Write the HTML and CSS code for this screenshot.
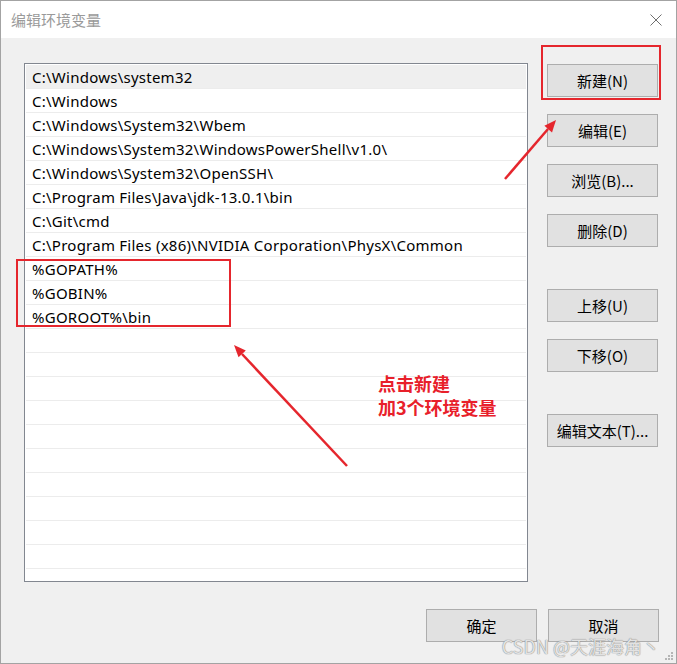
FILE: index.html
```html
<!DOCTYPE html>
<html lang="zh-CN">
<head>
    <meta charset="UTF-8">
    <title>编辑环境变量</title>
    <link rel="stylesheet" href="styles.css">
</head>
<body>
    <div class="window">
        <!-- 标题栏 -->
        <div class="titlebar">
            <span class="title">编辑环境变量</span>
            <svg class="close" width="12" height="12" viewBox="0 0 12 12">
                <path d="M0.5 0.5 L11.5 11.5 M11.5 0.5 L0.5 11.5" stroke="#6f6f6f" stroke-width="1" fill="none"/>
            </svg>
        </div>

        <div class="main">
            <div class="path-list">
                <div class="row selected">C:\Windows\system32</div>
                <div class="row">C:\Windows</div>
                <div class="row">C:\Windows\System32\Wbem</div>
                <div class="row">C:\Windows\System32\WindowsPowerShell\v1.0\</div>
                <div class="row">C:\Windows\System32\OpenSSH\</div>
                <div class="row">C:\Program Files\Java\jdk-13.0.1\bin</div>
                <div class="row">C:\Git\cmd</div>
                <div class="row">C:\Program Files (x86)\NVIDIA Corporation\PhysX\Common</div>
                <div class="row">%GOPATH%</div>
                <div class="row">%GOBIN%</div>
                <div class="row">%GOROOT%\bin</div>
                <div class="row"></div>
                <div class="row"></div>
                <div class="row"></div>
                <div class="row"></div>
                <div class="row"></div>
                <div class="row"></div>
                <div class="row"></div>
                <div class="row"></div>
                <div class="row"></div>
                <div class="row"></div>
                <div class="row"></div>
            </div>

            <div class="side-buttons">
                <button>新建(N)</button>
                <button>编辑(E)</button>
                <button>浏览(B)...</button>
                <button>删除(D)</button>
                <button class="group">上移(U)</button>
                <button>下移(O)</button>
                <button class="group">编辑文本(T)...</button>
            </div>
        </div>

        <div class="footer">
            <button>确定</button>
            <button>取消</button>
        </div>

        <!-- 标注 -->
        <div class="mark mark-new"></div>
        <div class="mark mark-go"></div>
        <div class="note">点击新建<br>加3个环境变量</div>
        <svg class="arrows" width="677" height="664" viewBox="0 0 677 664">
            <line x1="505" y1="179" x2="548" y2="129" stroke="#e5262d" stroke-width="2.5"/>
            <polygon points="556,120 552,132.4 544.4,125.8" fill="#e5262d"/>
            <line x1="347" y1="466" x2="242" y2="354" stroke="#e5262d" stroke-width="2.5"/>
            <polygon points="234,345 245.8,350.4 238.5,357.2" fill="#e5262d"/>
        </svg>

        <div class="watermark">CSDN @天涯海角丶</div>
        <svg class="grip" width="10" height="10" viewBox="0 0 10 10">
            <rect x="7" y="1" width="2" height="2" fill="#b5b5b5"/>
            <rect x="4" y="4" width="2" height="2" fill="#b5b5b5"/>
            <rect x="7" y="4" width="2" height="2" fill="#b5b5b5"/>
            <rect x="1" y="7" width="2" height="2" fill="#b5b5b5"/>
            <rect x="4" y="7" width="2" height="2" fill="#b5b5b5"/>
            <rect x="7" y="7" width="2" height="2" fill="#b5b5b5"/>
        </svg>
    </div>
</body>
</html>
```

FILE: styles.css
```css
body {
    margin: 0;
    padding: 0;
    background: #ffffff;
    font-family: "Noto Sans", "Noto Sans CJK SC", sans-serif;
    font-size: 15px;
    color: #000;
}
.window {
    position: relative;
    width: 677px;
    height: 664px;
    box-sizing: border-box;
    border: 1px solid #a3a3a3;
    background-color: #f0f0f0;
    overflow: hidden;
}
.titlebar {
    height: 37px;
    background-color: #fff;
    display: flex;
    align-items: center;
    justify-content: space-between;
    padding: 0 14px 0 10px;
}
.title {
    font-family: "Noto Sans CJK SC", sans-serif;
    font-size: 15px;
    color: #9a9a9a;
}
.close {
    margin-top: 1px;
}
.main {
    display: flex;
    align-items: flex-start;
    padding: 25px 0 0 23px;
}
.path-list {
    width: 504px;
    height: 519px;
    box-sizing: border-box;
    border: 1px solid #828790;
    background-color: #fff;
    padding: 1px 1px 0 1px;
    overflow: hidden;
}
.row {
    height: 24px;
    box-sizing: border-box;
    border-bottom: 1px solid #ececec;
    padding: 1px 0 0 6px;
    line-height: 22px;
    letter-spacing: 0.25px;
    white-space: nowrap;
}
.row.selected {
    background-color: #efefef;
}
.side-buttons {
    display: flex;
    flex-direction: column;
    gap: 17px;
    margin-left: 19px;
    padding-top: 1px;
}
.side-buttons .group {
    margin-top: 25px;
}
button {
    width: 111px;
    height: 33px;
    box-sizing: border-box;
    border: 1px solid #adadad;
    background-color: #e1e1e1;
    font-family: "Noto Sans CJK SC", sans-serif;
    font-size: 15px;
    color: #000;
    padding: 0;
    margin: 0;
}
.footer {
    display: flex;
    justify-content: flex-end;
    gap: 11px;
    padding: 27px 17px 0 0;
}
/* 红色标注 */
.mark {
    position: absolute;
    border: 2px solid #e5262d;
    box-sizing: border-box;
}
.mark-new {
    left: 540px;
    top: 44px;
    width: 120px;
    height: 55px;
}
.mark-go {
    left: 15px;
    top: 258px;
    width: 215px;
    height: 68px;
}
.note {
    position: absolute;
    left: 377px;
    top: 370px;
    font-family: "Noto Sans CJK SC", sans-serif;
    font-size: 18px;
    font-weight: bold;
    line-height: 24px;
    color: #e8202a;
}
.arrows {
    position: absolute;
    left: -1px;
    top: -1px;
}
.watermark {
    position: absolute;
    right: 16px;
    bottom: 4px;
    font-family: "Noto Sans CJK SC", sans-serif;
    font-size: 18px;
    color: rgba(255, 255, 255, 0.75);
    text-shadow: 0 0 1px #8a8a8a, 0 0 1px #8a8a8a;
}
.grip {
    position: absolute;
    right: 2px;
    bottom: 2px;
}
```
